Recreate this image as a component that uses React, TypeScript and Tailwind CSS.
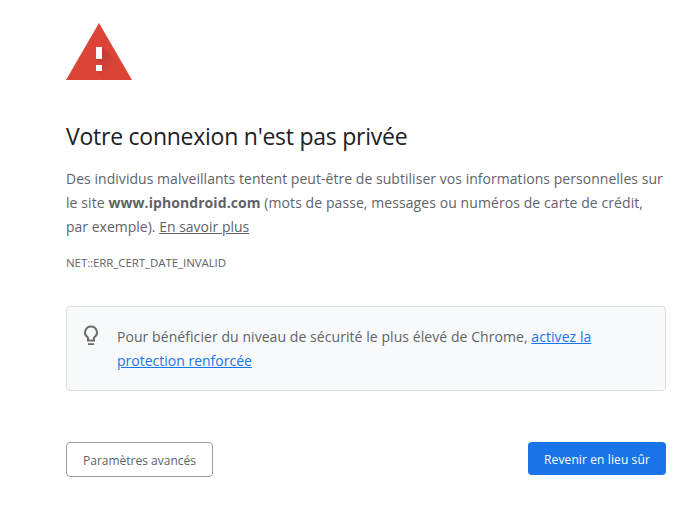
function WarningIcon() {
  return (
    <svg className="block h-[57px] w-[66px]" viewBox="0 0 66 57">
      <defs>
        <linearGradient id="shade" gradientUnits="userSpaceOnUse" x1="32" y1="31" x2="48" y2="47">
          <stop offset="0" stopColor="#3e2723" stopOpacity="0.18" />
          <stop offset="1" stopColor="#3e2723" stopOpacity="0.01" />
        </linearGradient>
      </defs>
      <path d="M33 0L66 57H0z" fill="#db4437" />
      <path d="M36 24L53 40L63 57H39L30 48L36 42L30 36z" fill="url(#shade)" />
      <path d="M30 24h6v12h-6zM30 42h6v6h-6z" fill="#fff" />
    </svg>
  );
}

function BulbIcon() {
  return (
    <svg className="mt-[17px] block size-[24px] shrink-0" viewBox="0 0 24 24">
      <path
        d="M12 2.500a5.900 5.900 0 0 0-3.500 10.650c.35.28.5.55.5.95V16.500h6v-2.400c0-.4.15-.67.5-.95A5.900 5.900 0 0 0 12 2.500z"
        fill="none"
        stroke="#6c6c6c"
        strokeWidth="2"
      />
      <path d="M9 19.200h6v1.800H9z" fill="#6c6c6c" />
    </svg>
  );
}

export default function App() {
  return (
    <main className="h-[508px] w-[690px] overflow-hidden bg-white pl-[66px] pt-[23px] font-['Open_Sans','Noto_Sans',sans-serif] text-[14px] leading-[24px] text-[#5f6368]">
      <WarningIcon />
      <h1 className="mt-[40px] whitespace-nowrap text-[23px] leading-[32px] tracking-[-0.25px] text-[#202124]">Votre connexion n'est pas privée</h1>
      <div className="mt-[15px] whitespace-nowrap">
        <p className="tracking-[0.04px]">Des individus malveillants tentent peut-être de subtiliser vos informations personnelles sur</p>
        <p className="tracking-[0.08px]">
          le site <strong className="font-bold">www.iphondroid.com</strong> (mots de passe, messages ou numéros de carte de crédit,
        </p>
        <p>
          par exemple). <a href="#" className="underline">En savoir plus</a>
        </p>
      </div>
      <div className="mt-[12px] whitespace-nowrap text-[11.500px] leading-[24px] tracking-[-0.08px]">NET::ERR_CERT_DATE_INVALID</div>
      <section className="mt-[31px] flex h-[85px] w-[600px] rounded-[4px] border border-[#dadce0] bg-[#f8f9fa] pl-[12px]">
        <BulbIcon />
        <div className="ml-[14px] mt-[18px] whitespace-nowrap">
          <p className="tracking-[0.065px]">
            Pour bénéficier du niveau de sécurité le plus élevé de Chrome, <a href="#" className="text-[#1a73e8] underline">activez la</a>
          </p>
          <p><a href="#" className="text-[#1a73e8] underline">protection renforcée</a></p>
        </div>
      </section>
      <div className="mt-[51px] flex w-[600px] items-start justify-between text-[12px]">
        <button className="h-[35px] w-[147px] whitespace-nowrap rounded-[4px] border border-[#9aa0a6] bg-white pt-[2px]">Paramètres avancés</button>
        <button className="h-[33px] w-[138px] whitespace-nowrap rounded-[4px] bg-[#1a73e8] pt-[2px] tracking-[0.11px] text-white">Revenir en lieu sûr</button>
      </div>
    </main>
  );
}
